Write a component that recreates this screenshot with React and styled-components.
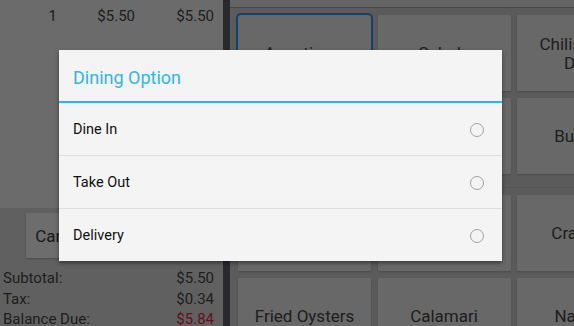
import React from "react";
import styled, { createGlobalStyle } from "styled-components";

const GlobalStyle = createGlobalStyle`
  html, body { margin: 0; padding: 0; }
  body {
    font-family: Roboto, "Liberation Sans", sans-serif;
    overflow: hidden;
    background: #000;
  }
`;

const Screen = styled.div`
  position: relative;
  display: flex;
  width: 574px;
  height: 326px;
  overflow: hidden;
`;

const OrderPanel = styled.div`
  width: 223px;
  flex-shrink: 0;
  display: flex;
  flex-direction: column;
  background: #ededed;
  color: #444;
`;

const OrderList = styled.div`
  flex: 1;
  padding: 6px 9px 0 0;
`;

const OrderRow = styled.div`
  display: grid;
  grid-template-columns: 57px 78px 1fr;
  font-size: 15px;
  line-height: 20px;
  text-align: right;
`;

const OrderFooter = styled.div`
  height: 118px;
  flex-shrink: 0;
  background: #d6d6d6;
  padding: 5px 9px 0 3px;
  box-sizing: border-box;
`;

const ButtonRow = styled.div`
  display: flex;
  gap: 6px;
  padding: 0 18px 0 23px;
  margin-bottom: 10px;
`;

const FooterButton = styled.div`
  height: 45px;
  width: ${(p) => (p.$grow ? "auto" : "70px")};
  flex: ${(p) => (p.$grow ? 1 : "none")};
  background: #f1f1f1;
  box-shadow: 0 1px 2px rgba(0, 0, 0, 0.25);
  display: flex;
  align-items: center;
  justify-content: center;
  font-size: 17px;
  color: #3a3a3a;
`;

const SummaryRow = styled.div`
  display: flex;
  justify-content: space-between;
  font-size: 15px;
  line-height: 20.5px;
  color: #444;
`;

const Amount = styled.span`
  color: ${(p) => (p.$due ? "#e0223c" : "#444")};
`;

const PanelDivider = styled.div`
  width: 7px;
  flex-shrink: 0;
  background: #5d5d66;
`;

const MenuPanel = styled.div`
  flex: 1;
  min-width: 0;
  overflow: hidden;
  display: flex;
  flex-direction: column;
  background: #c9c9c9;
`;

const TopStrip = styled.div`
  height: 7px;
  flex-shrink: 0;
  background: #dedede;
  border-bottom: 1px solid #a0a0a0;
`;

const TileGrid = styled.div`
  display: grid;
  grid-template-columns: repeat(3, 133px);
  grid-auto-rows: 76px;
  column-gap: 6.5px;
  row-gap: 7px;
  padding: 7px 0 ${(p) => (p.$categories ? "13px" : "0")} 8px;
  border-bottom: ${(p) => (p.$categories ? "1px solid #bdbdbd" : "none")};
`;

const Tile = styled.div`
  background: #e6e6e6;
  border-radius: ${(p) => (p.$selected ? "3px" : "1px")};
  box-shadow: ${(p) =>
    p.$selected
      ? "0 0 0 2px #2f8cf0"
      : "0 1px 2px rgba(0, 0, 0, 0.18)"};
  display: flex;
  align-items: center;
  justify-content: center;
  text-align: center;
  padding: 1px 14px 0;
  font-size: 17px;
  line-height: 19px;
  color: #444;
`;

const Scrim = styled.div`
  position: absolute;
  inset: 0;
  background: rgba(0, 0, 0, 0.55);
  display: flex;
  align-items: flex-start;
  padding: 50px 0 0 59px;
`;

const Dialog = styled.div`
  width: 443px;
  background: #f4f4f4;
  box-shadow: 0 2px 4px rgba(0, 0, 0, 0.45);
`;

const DialogTitle = styled.div`
  height: 53px;
  box-sizing: border-box;
  display: flex;
  align-items: center;
  padding: 3px 0 0 14px;
  font-size: 18px;
  color: #33b5e5;
  border-bottom: 2px solid #33b5e5;
`;

const OptionRow = styled.div`
  height: 52px;
  box-sizing: border-box;
  display: flex;
  align-items: center;
  justify-content: space-between;
  padding: 1px 18px 0 14px;
  font-size: 14.5px;
  color: #111;
  & + & {
    border-top: 1px solid #dedede;
    height: 53px;
  }
`;

const Radio = styled.span`
  width: 14px;
  height: 14px;
  border-radius: 50%;
  border: 1px solid #a2a2a2;
  box-sizing: border-box;
`;

const categories = [
  { name: "Appetizers", selected: true },
  { name: "Salads" },
  { name: "Chilis & Hot Dogs" },
  { name: "Soups" },
  { name: "Entrees" },
  { name: "Burgers" },
];

const items = ["Shrimp", "Wings", "Crab Dip", "Fried Oysters", "Calamari", "Nachos"];

const options = ["Dine In", "Take Out", "Delivery"];

export default function App() {
  return (
    <>
      <GlobalStyle />
      <Screen>
        <OrderPanel>
          <OrderList>
            <OrderRow>
              <span>1</span>
              <span>$5.50</span>
              <span>$5.50</span>
            </OrderRow>
          </OrderList>
          <OrderFooter>
            <ButtonRow>
              <FooterButton>Cancel</FooterButton>
              <FooterButton $grow>Pay</FooterButton>
            </ButtonRow>
            <SummaryRow>
              <span>Subtotal:</span>
              <Amount>$5.50</Amount>
            </SummaryRow>
            <SummaryRow>
              <span>Tax:</span>
              <Amount>$0.34</Amount>
            </SummaryRow>
            <SummaryRow>
              <span>Balance Due:</span>
              <Amount $due>$5.84</Amount>
            </SummaryRow>
          </OrderFooter>
        </OrderPanel>
        <PanelDivider />
        <MenuPanel>
          <TopStrip />
          <TileGrid $categories>
            {categories.map((c) => (
              <Tile key={c.name} $selected={c.selected}>
                {c.name}
              </Tile>
            ))}
          </TileGrid>
          <TileGrid>
            {items.map((n) => (
              <Tile key={n}>{n}</Tile>
            ))}
          </TileGrid>
        </MenuPanel>
        <Scrim>
          <Dialog>
            <DialogTitle>Dining Option</DialogTitle>
            {options.map((o) => (
              <OptionRow key={o}>
                <span>{o}</span>
                <Radio />
              </OptionRow>
            ))}
          </Dialog>
        </Scrim>
      </Screen>
    </>
  );
}
